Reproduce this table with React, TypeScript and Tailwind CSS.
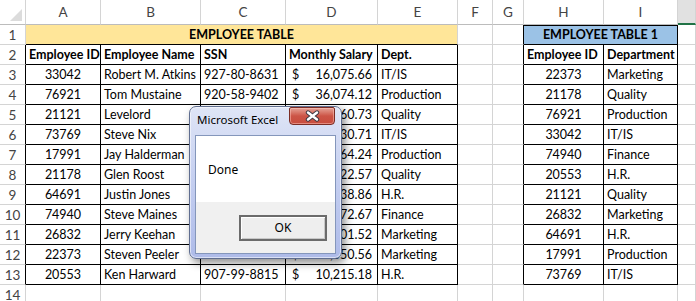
import React from 'react';

type Employee = {
  id: string;
  name: string;
  ssn: string;
  salary: string;
  dept: string;
};

const EMPLOYEES: Employee[] = [
  { id: '33042', name: 'Robert M. Atkins', ssn: '927-80-8631', salary: '16,075.66', dept: 'IT/IS' },
  { id: '76921', name: 'Tom Mustaine', ssn: '920-58-9402', salary: '36,074.12', dept: 'Production' },
  { id: '21121', name: 'Levelord', ssn: '918-23-4471', salary: '28,460.73', dept: 'Quality' },
  { id: '73769', name: 'Steve Nix', ssn: '904-61-2283', salary: '19,530.71', dept: 'IT/IS' },
  { id: '17991', name: 'Jay Halderman', ssn: '912-47-6605', salary: '41,264.24', dept: 'Production' },
  { id: '21178', name: 'Glen Roost', ssn: '935-12-7719', salary: '24,822.57', dept: 'Quality' },
  { id: '64691', name: 'Justin Jones', ssn: '926-74-3308', salary: '31,738.86', dept: 'H.R.' },
  { id: '74940', name: 'Steve Maines', ssn: '917-35-9024', salary: '45,172.67', dept: 'Finance' },
  { id: '26832', name: 'Jerry Keehan', ssn: '908-66-1457', salary: '22,901.52', dept: 'Marketing' },
  { id: '22373', name: 'Steven Peeler', ssn: '931-09-5562', salary: '27,350.56', dept: 'Marketing' },
  { id: '20553', name: 'Ken Harward', ssn: '907-99-8815', salary: '10,215.18', dept: 'H.R.' },
];

const TABLE_ONE: [string, string][] = [
  ['22373', 'Marketing'],
  ['21178', 'Quality'],
  ['76921', 'Production'],
  ['33042', 'IT/IS'],
  ['74940', 'Finance'],
  ['20553', 'H.R.'],
  ['21121', 'Quality'],
  ['26832', 'Marketing'],
  ['64691', 'H.R.'],
  ['17991', 'Production'],
  ['73769', 'IT/IS'],
];

const LETTERS = ['A', 'B', 'C', 'D', 'E', 'F', 'G', 'H', 'I'];

// gray gridline on both sides unless overridden
function Cell({
  className = '',
  children,
}: {
  className?: string;
  children?: React.ReactNode;
}) {
  return (
    <div
      className={`flex items-end overflow-hidden whitespace-nowrap border-b border-r pb-[1px] leading-[16px] ${className}`}
    >
      {children}
    </div>
  );
}

function RowHeader({ n, inTable }: { n: number; inTable?: boolean }) {
  return (
    <Cell
      className={`justify-center border-b-[#d4d4d4] text-[13.5px] text-[#444] ${
        inTable ? 'border-r-black' : 'border-r-[#d4d4d4]'
      }`}
    >
      {n}
    </Cell>
  );
}

const T = 'border-r-black border-b-black';
const G = 'border-r-[#d4d4d4] border-b-[#d4d4d4]';

function MessageBox() {
  return (
    <div className="absolute left-[189px] top-[106px] flex h-[153px] w-[153px] flex-col rounded-[7px] border border-[#5f6d8f] bg-gradient-to-b from-[#dfe5f6] via-[#c4cef0] to-[#aebbe9] shadow-[inset_0_0_0_1px_rgba(255,255,255,0.55),3px_4px_8px_rgba(0,0,0,0.45)]">
      {/* Title bar */}
      <div className="flex h-[28px] items-start justify-between">
        <span className="ml-[7px] mt-[5px] font-['Noto_Sans',sans-serif] text-[11.5px] leading-[16px] text-black">
          Microsoft Excel
        </span>
        <div className="mr-[6px] flex h-[18px] w-[46px] items-center justify-center rounded-b-[4px] rounded-t-[2px] border border-[#7b2c24] bg-gradient-to-b from-[#e4a196] via-[#cc5446] to-[#c84c3e] shadow-[inset_0_0_0_1px_rgba(255,200,190,0.5)]">
          <svg width="15" height="12" viewBox="0 0 15 12">
            <path
              d="M3 2.5L12 9.5M12 2.5L3 9.5"
              stroke="#3d3a44"
              strokeWidth="4.4"
              strokeLinecap="round"
            />
            <path
              d="M3 2.5L12 9.5M12 2.5L3 9.5"
              stroke="#ffffff"
              strokeWidth="2.4"
              strokeLinecap="round"
            />
          </svg>
        </div>
      </div>

      {/* Client area */}
      <div className="mx-[5px] flex h-[119px] flex-col border border-[#8496bb] bg-white font-['Noto_Sans',sans-serif] text-[12px] text-black">
        <div className="h-[66px] pl-[12px] pt-[26px] leading-[16px]">Done</div>
        <div className="flex flex-1 justify-end bg-[#f0f0f0] pr-[8px] pt-[13px]">
          <div className="flex h-[26px] w-[88px] items-center justify-center border-2 border-[#6b6b6b] bg-[#eeeeee] shadow-[inset_1px_1px_0_#ffffff,inset_-1px_-1px_0_#c8c8c8]">
            OK
          </div>
        </div>
      </div>
    </div>
  );
}

export default function App() {
  return (
    <div className="relative h-[301px] w-[696px] overflow-hidden bg-white font-['Lato',sans-serif] text-[12.5px] text-black">
      <div className="grid grid-cols-[26px_75px_100px_85px_92px_80px_35px_31px_80px_74px_1fr] grid-rows-[25px_repeat(14,20px)]">
        {/* Column headers */}
        <div className="relative border-b border-r border-b-[#bcbcbc] border-r-[#d4d4d4]">
          <svg width="26" height="25" className="absolute inset-0">
            <polygon points="22,9 22,21 10,21" fill="#dcdcdc" />
          </svg>
        </div>
        {LETTERS.map((l) => (
          <div
            key={l}
            className="flex items-center justify-center border-b border-r border-b-[#bcbcbc] border-r-[#d4d4d4] text-[13.5px] text-[#444]"
          >
            {l}
          </div>
        ))}
        <div className="border-b-2 border-r border-b-[#217346] border-r-[#d4d4d4] bg-[#e1e1e1]" />

        {/* Row 1 */}
        <RowHeader n={1} />
        <Cell className="col-span-5 justify-center border-b-black border-r-[#d4d4d4] bg-[#ffe699] font-bold">
          EMPLOYEE TABLE
        </Cell>
        <Cell className={G} />
        <Cell className="border-b-[#d4d4d4] border-r-black" />
        <Cell className={`col-span-2 justify-center bg-[#9bc2e6] font-bold shadow-[inset_0_1px_0_#000] ${T}`}>
          EMPLOYEE TABLE 1
        </Cell>
        <Cell className={G} />

        {/* Row 2 */}
        <RowHeader n={2} inTable />
        <Cell className={`pl-[3px] font-bold ${T}`}>Employee ID</Cell>
        <Cell className={`pl-[3px] font-bold ${T}`}>Employee Name</Cell>
        <Cell className={`pl-[3px] font-bold ${T}`}>SSN</Cell>
        <Cell className={`pl-[3px] font-bold ${T}`}>Monthly Salary</Cell>
        <Cell className={`pl-[3px] font-bold ${T}`}>Dept.</Cell>
        <Cell className={G} />
        <Cell className="border-b-[#d4d4d4] border-r-black" />
        <Cell className={`pl-[3px] font-bold ${T}`}>Employee ID</Cell>
        <Cell className={`pl-[3px] font-bold ${T}`}>Department</Cell>
        <Cell className={G} />

        {/* Data rows */}
        {EMPLOYEES.map((e, i) => (
          <React.Fragment key={e.id}>
            <RowHeader n={i + 3} inTable />
            <Cell className={`justify-center ${T}`}>{e.id}</Cell>
            <Cell className={`pl-[3px] ${T}`}>{e.name}</Cell>
            <Cell className={`pl-[3px] ${T}`}>{e.ssn}</Cell>
            <Cell className={`justify-between pl-[6px] pr-[5px] ${T}`}>
              <span>$</span>
              <span>{e.salary}</span>
            </Cell>
            <Cell className={`pl-[3px] ${T}`}>{e.dept}</Cell>
            <Cell className={G} />
            <Cell className="border-b-[#d4d4d4] border-r-black" />
            <Cell className={`justify-center ${T}`}>{TABLE_ONE[i][0]}</Cell>
            <Cell className={`pl-[3px] ${T}`}>{TABLE_ONE[i][1]}</Cell>
            <Cell className={G} />
          </React.Fragment>
        ))}

        {/* Row 14 */}
        <RowHeader n={14} />
        {Array.from({ length: 10 }).map((_, i) => (
          <Cell key={i} className={G} />
        ))}
      </div>

      <MessageBox />
    </div>
  );
}
